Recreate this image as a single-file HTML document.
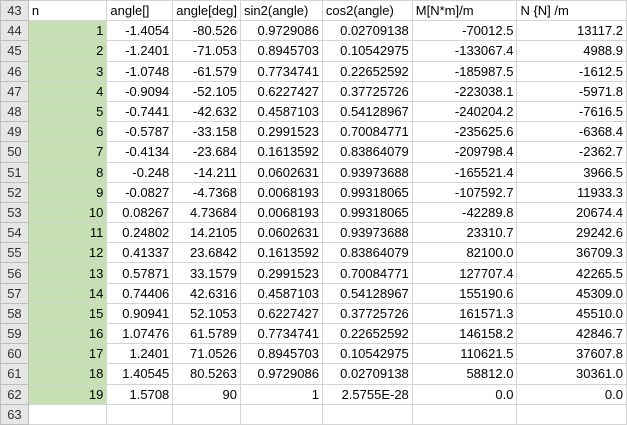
<!DOCTYPE html><html><head><style>
body{margin:0;width:627px;height:415px;overflow:hidden;background:#fff;font-family:"Liberation Sans",sans-serif;font-size:13px;color:#000}
table{border-collapse:collapse;table-layout:fixed;position:absolute;left:0;top:0}
td{border:1px solid #d4d4d4;height:19.2px;padding:0 3px;white-space:nowrap;overflow:hidden;text-align:right;line-height:19px}
td.h{background:#e6e6e6;color:#333;text-align:center;border-color:#bdbdbd;padding:0}
td.g{background:#c6e0b4}
tr.t td{text-align:left}
tr.t td.h{text-align:center}
</style></head><body>
<table>
<colgroup><col style="width:28px"><col style="width:79px"><col style="width:66px"><col style="width:67px"><col style="width:82px"><col style="width:90px"><col style="width:105px"><col style="width:110px"></colgroup>
<tr class="t"><td class="h">43</td><td>n</td><td>angle[]</td><td>angle[deg]</td><td>sin2(angle)</td><td>cos2(angle)</td><td>M[N*m]/m</td><td>N {N] /m</td></tr>
<tr><td class="h">44</td><td class="g">1</td><td>-1.4054</td><td>-80.526</td><td>0.9729086</td><td>0.02709138</td><td>-70012.5</td><td>13117.2</td></tr>
<tr><td class="h">45</td><td class="g">2</td><td>-1.2401</td><td>-71.053</td><td>0.8945703</td><td>0.10542975</td><td>-133067.4</td><td>4988.9</td></tr>
<tr><td class="h">46</td><td class="g">3</td><td>-1.0748</td><td>-61.579</td><td>0.7734741</td><td>0.22652592</td><td>-185987.5</td><td>-1612.5</td></tr>
<tr><td class="h">47</td><td class="g">4</td><td>-0.9094</td><td>-52.105</td><td>0.6227427</td><td>0.37725726</td><td>-223038.1</td><td>-5971.8</td></tr>
<tr><td class="h">48</td><td class="g">5</td><td>-0.7441</td><td>-42.632</td><td>0.4587103</td><td>0.54128967</td><td>-240204.2</td><td>-7616.5</td></tr>
<tr><td class="h">49</td><td class="g">6</td><td>-0.5787</td><td>-33.158</td><td>0.2991523</td><td>0.70084771</td><td>-235625.6</td><td>-6368.4</td></tr>
<tr><td class="h">50</td><td class="g">7</td><td>-0.4134</td><td>-23.684</td><td>0.1613592</td><td>0.83864079</td><td>-209798.4</td><td>-2362.7</td></tr>
<tr><td class="h">51</td><td class="g">8</td><td>-0.248</td><td>-14.211</td><td>0.0602631</td><td>0.93973688</td><td>-165521.4</td><td>3966.5</td></tr>
<tr><td class="h">52</td><td class="g">9</td><td>-0.0827</td><td>-4.7368</td><td>0.0068193</td><td>0.99318065</td><td>-107592.7</td><td>11933.3</td></tr>
<tr><td class="h">53</td><td class="g">10</td><td>0.08267</td><td>4.73684</td><td>0.0068193</td><td>0.99318065</td><td>-42289.8</td><td>20674.4</td></tr>
<tr><td class="h">54</td><td class="g">11</td><td>0.24802</td><td>14.2105</td><td>0.0602631</td><td>0.93973688</td><td>23310.7</td><td>29242.6</td></tr>
<tr><td class="h">55</td><td class="g">12</td><td>0.41337</td><td>23.6842</td><td>0.1613592</td><td>0.83864079</td><td>82100.0</td><td>36709.3</td></tr>
<tr><td class="h">56</td><td class="g">13</td><td>0.57871</td><td>33.1579</td><td>0.2991523</td><td>0.70084771</td><td>127707.4</td><td>42265.5</td></tr>
<tr><td class="h">57</td><td class="g">14</td><td>0.74406</td><td>42.6316</td><td>0.4587103</td><td>0.54128967</td><td>155190.6</td><td>45309.0</td></tr>
<tr><td class="h">58</td><td class="g">15</td><td>0.90941</td><td>52.1053</td><td>0.6227427</td><td>0.37725726</td><td>161571.3</td><td>45510.0</td></tr>
<tr><td class="h">59</td><td class="g">16</td><td>1.07476</td><td>61.5789</td><td>0.7734741</td><td>0.22652592</td><td>146158.2</td><td>42846.7</td></tr>
<tr><td class="h">60</td><td class="g">17</td><td>1.2401</td><td>71.0526</td><td>0.8945703</td><td>0.10542975</td><td>110621.5</td><td>37607.8</td></tr>
<tr><td class="h">61</td><td class="g">18</td><td>1.40545</td><td>80.5263</td><td>0.9729086</td><td>0.02709138</td><td>58812.0</td><td>30361.0</td></tr>
<tr><td class="h">62</td><td class="g">19</td><td>1.5708</td><td>90</td><td>1</td><td>2.5755E-28</td><td>0.0</td><td>0.0</td></tr>
<tr><td class="h">63</td><td></td><td></td><td></td><td></td><td></td><td></td><td></td></tr>
</table>
</body></html>
